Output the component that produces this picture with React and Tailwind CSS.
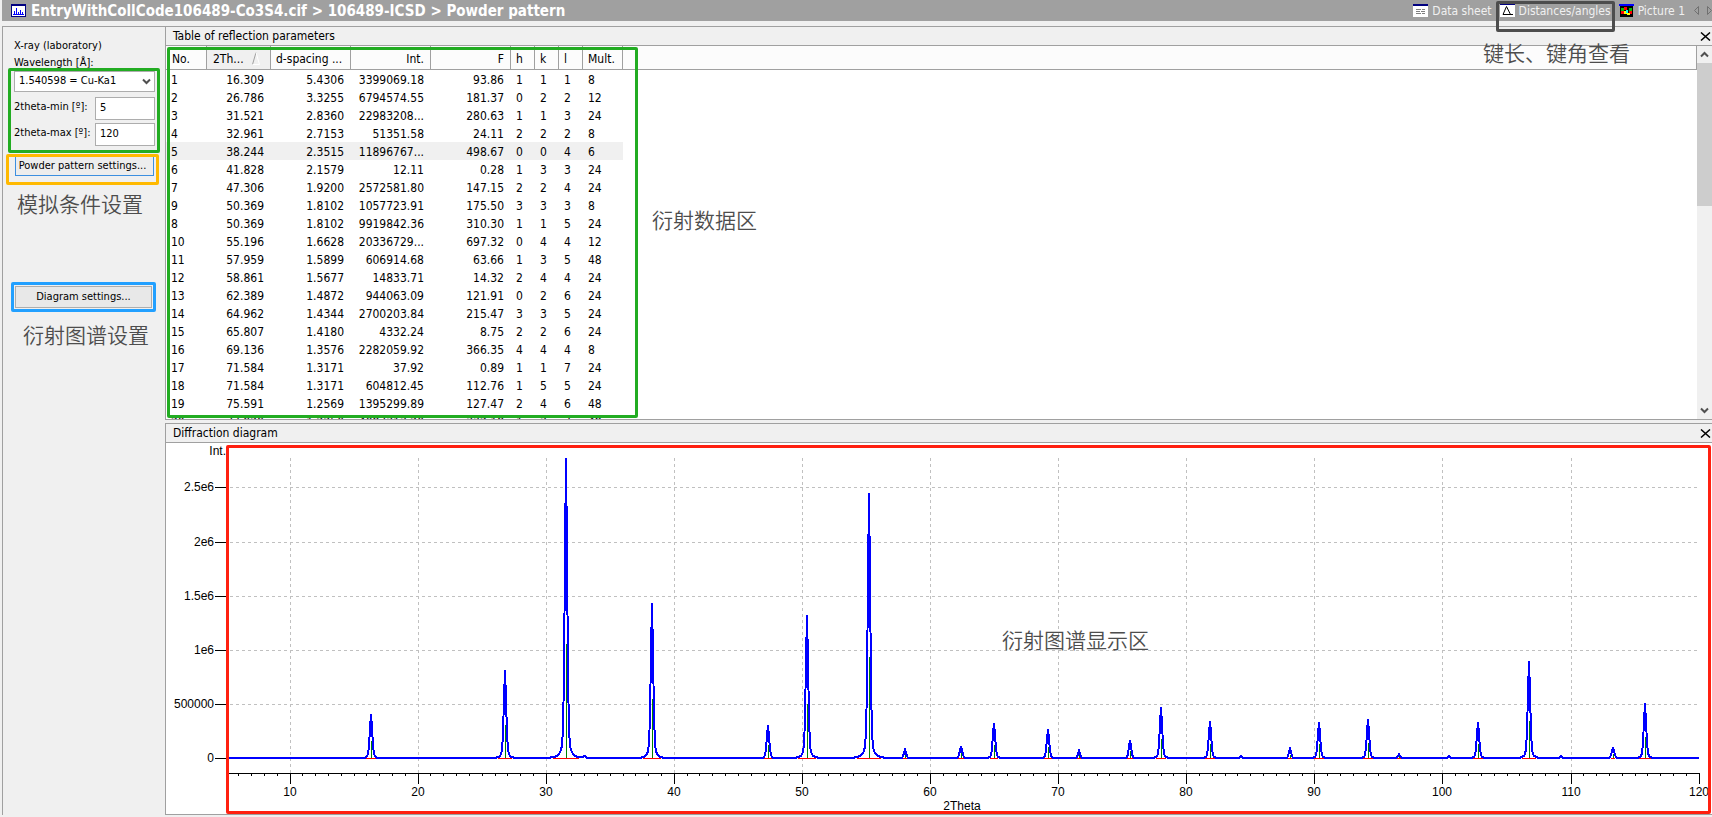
const reflections = [
  ['1', '16.309', '5.4306', '3399069.18', '93.86', '1', '1', '1', '8'],
  ['2', '26.786', '3.3255', '6794574.55', '181.37', '0', '2', '2', '12'],
  ['3', '31.521', '2.8360', '22983208...', '280.63', '1', '1', '3', '24'],
  ['4', '32.961', '2.7153', '51351.58', '24.11', '2', '2', '2', '8'],
  ['5', '38.244', '2.3515', '11896767...', '498.67', '0', '0', '4', '6'],
  ['6', '41.828', '2.1579', '12.11', '0.28', '1', '3', '3', '24'],
  ['7', '47.306', '1.9200', '2572581.80', '147.15', '2', '2', '4', '24'],
  ['9', '50.369', '1.8102', '1057723.91', '175.50', '3', '3', '3', '8'],
  ['8', '50.369', '1.8102', '9919842.36', '310.30', '1', '1', '5', '24'],
  ['10', '55.196', '1.6628', '20336729...', '697.32', '0', '4', '4', '12'],
  ['11', '57.959', '1.5899', '606914.68', '63.66', '1', '3', '5', '48'],
  ['12', '58.861', '1.5677', '14833.71', '14.32', '2', '4', '4', '24'],
  ['13', '62.389', '1.4872', '944063.09', '121.91', '0', '2', '6', '24'],
  ['14', '64.962', '1.4344', '2700203.84', '215.47', '3', '3', '5', '24'],
  ['15', '65.807', '1.4180', '4332.24', '8.75', '2', '2', '6', '24'],
  ['16', '69.136', '1.3576', '2282059.92', '366.35', '4', '4', '4', '8'],
  ['17', '71.584', '1.3171', '37.92', '0.89', '1', '1', '7', '24'],
  ['18', '71.584', '1.3171', '604812.45', '112.76', '1', '5', '5', '24'],
  ['19', '75.591', '1.2569', '1395299.89', '127.47', '2', '4', '6', '48'],
  ['20', '77.929', '1.2250', '4087313.20', '332.18', '1', '3', '7', '48'],
]

// [2theta, peak height in chart units]
const peaks = [
  [16.25, 44], [26.75, 88], [31.5, 300], [32.96, 2], [38.24, 155], [47.3, 33],
  [50.33, 143], [55.19, 265], [57.95, 8], [62.35, 12], [64.93, 35], [69.12, 29],
  [71.57, 7], [75.55, 18], [77.92, 51], [81.81, 37], [84.2, 2], [88, 9],
  [90.3, 36], [94.12, 39], [96.5, 4], [100.4, 2], [102.7, 36], [106.7, 97],
  [109.15, 2], [113.25, 11], [115.75, 55],
]

const BASE = 315
const AXIS = 330
const toX = (theta) => 60.5 + (theta - 5) * 12.81

const yTicks = [
  ['0', 315], ['500000', 261], ['1e6', 207], ['1.5e6', 153], ['2e6', 99], ['2.5e6', 44],
]

function profile(x) {
  let sum = 0
  for (const [theta, h] of peaks) {
    const d = (x - Math.round(toX(theta))) / 1.4
    if (Math.abs(d) > 14) continue
    sum += h * (0.4 / (1 + d * d) + 0.6 * Math.exp(-0.693 * d * d))
  }
  return sum
}

const curve = Array.from({ length: 1474 }, (_, i) => {
  const x = 60 + i
  return `${x},${BASE - Math.floor(profile(x))}`
}).join(' ')

function PatternIcon() {
  return (
    <svg width="15" height="13" viewBox="0 0 15 13" shapeRendering="crispEdges">
      <rect x=".5" y=".5" width="14" height="12" fill="#fff" stroke="#000080" />
      <path d="M0 1h15" stroke="#000080" strokeWidth="2" />
      <path d="M2 10.5h11M3.5 7v3M5.5 4v6M7.5 8v2M9.5 6v4M11.5 8v2" stroke="#0000ff" fill="none" />
    </svg>
  )
}

function SheetIcon() {
  return (
    <svg width="15" height="13" viewBox="0 0 15 13" shapeRendering="crispEdges">
      <rect width="15" height="13" fill="#fff" />
      <rect width="15" height="2" fill="#000080" />
      <path d="M3 5.5h5M9 5.5h3M3 7.5h4M8 7.5h4M3 9.5h5M9 9.5h3" stroke="#808080" fill="none" />
    </svg>
  )
}

function AngleIcon() {
  return (
    <svg width="15" height="13" viewBox="0 0 15 13">
      <rect width="15" height="13" fill="#fff" />
      <rect width="15" height="1" fill="#000080" />
      <path d="M6.500 2.500L3 10.500h10M6.500 2.500l4 8" stroke="#000" fill="none" />
    </svg>
  )
}

function PictureIcon() {
  return (
    <svg width="15" height="13" viewBox="0 0 15 13" shapeRendering="crispEdges">
      <rect width="15" height="2" fill="#0000ff" />
      <rect x="1" y="2" width="13" height="11" fill="#000" />
      <path d="M2 7h3v3H2zM5 3h3v3H5zM10 7h3v3h-3z" fill="#ff0000" />
      <path d="M2 4h3v3H2zM10 4h3v3h-3z" fill="#00c000" />
      <path d="M5 7h3v3H5zM8 9h3v2H8z" fill="#ffff00" />
      <path d="M7 6h2v3H7z" fill="#00ffff" />
    </svg>
  )
}

function Chevron({ up = false }) {
  return (
    <svg width="9" height="7" viewBox="0 0 9 7" className={up ? 'rotate-180' : ''}>
      <path d="M1 1.5l3.500 3.500L8 1.500" fill="none" stroke="#505050" strokeWidth="2" />
    </svg>
  )
}

function PanelTitle({ children }) {
  return (
    <div className="flex h-[19px] items-center justify-between border-b border-[#a0a0a0] pl-[7px] pr-px">
      <h2 className="text-[12px]">{children}</h2>
      <button type="button" aria-label="Close panel">
        <svg width="11" height="9" viewBox="0 0 11 9">
          <path d="M1 .5l9 8M10 .5l-9 8" stroke="#000" strokeWidth="1.500" />
        </svg>
      </button>
    </div>
  )
}

function TitleBar() {
  return (
    <header className="flex h-[21px] items-center justify-between bg-[#a0a0a0] pl-[9px] text-white">
      <div className="flex items-center gap-[5px]">
        <PatternIcon />
        <h1 className="text-[15px] font-bold leading-5">
          EntryWithCollCode106489-Co3S4.cif &gt; 106489-ICSD &gt; Powder pattern
        </h1>
      </div>
      <nav className="flex items-center gap-2 text-[12px] text-[#f0f0f0]">
        <a href="#sheet" className="flex items-center gap-1"><SheetIcon />Data sheet</a>
        <a href="#distances" className="relative flex items-center gap-1">
          <AngleIcon />Distances/angles
          <span className="absolute -inset-x-1 -top-px h-[31px] rounded-[2px] border-3 border-[#4d4d4d]" />
        </a>
        <a href="#picture" className="flex items-center gap-1"><PictureIcon />Picture 1</a>
        <svg width="19" height="9" viewBox="0 0 19 9" fill="none" stroke="#707070">
          <path d="M5.500 .5v8l-4-4zM14.500 .5v8l4-4z" />
        </svg>
      </nav>
    </header>
  )
}

function Caption({ children, className = '' }) {
  return (
    <p className={`font-['Noto_Sans_CJK_SC',sans-serif] text-[21px] font-[350] leading-6 text-[#4d4d4d] ${className}`}>
      {children}
    </p>
  )
}

function Settings() {
  return (
    <aside className="w-[162px] shrink-0 text-[11px]">
      <div className="flex flex-col pl-[11px] pt-[10px] leading-[17px]">
        <span>X-ray (laboratory)</span>
        <label htmlFor="wavelength">Wavelength [Å]:</label>
      </div>
      <div className="ml-[5px] mt-[-3px] flex h-[85px] w-[152px] flex-col rounded-[2px] border-3 border-[#22ac22] pl-[3px] pr-0.5">
        <div className="relative">
          <select id="wavelength" className="block h-[21px] w-full appearance-none border border-[#adadad] bg-white pl-1">
            <option>1.540598 = Cu-Ka1</option>
          </select>
          <span className="pointer-events-none absolute right-1 top-[7px]"><Chevron /></span>
        </div>
        <div className="mt-[5px] flex items-start justify-between">
          <label htmlFor="tmin" className="leading-5">2theta-min [º]:</label>
          <input id="tmin" defaultValue="5" className="h-[23px] w-[60px] border border-[#adadad] bg-white px-1 pb-[3px]" />
        </div>
        <div className="mt-[3px] flex items-start justify-between">
          <label htmlFor="tmax" className="leading-5">2theta-max [º]:</label>
          <input id="tmax" defaultValue="120" className="h-[23px] w-[60px] border border-[#adadad] bg-white px-1 pb-[3px]" />
        </div>
      </div>
      <div className="ml-[3px] mt-[1px] h-[31px] w-[153px] rounded-[2px] border-3 border-[#ffb900] pl-1.5 pr-0.5">
        <button type="button" className="block h-[19px] w-full whitespace-nowrap border border-t-0 border-[#3c8fe0] bg-[#ededed] pr-1 leading-[18px]">
          Powder pattern settings...
        </button>
      </div>
      <Caption className="ml-[14px] mt-[6px]">模拟条件设置</Caption>
      <div className="ml-[8px] mt-[67px] h-[30px] w-[145px] rounded-[2px] border-3 border-[#22a0ff] p-px">
        <button type="button" className="block h-full w-full border border-[#adadad] bg-[#e8e8e8] leading-4">
          Diagram settings...
        </button>
      </div>
      <Caption className="ml-[20px] mt-[10px]">衍射图谱设置</Caption>
    </aside>
  )
}

const th = 'h-[24px] border-b border-r border-[#a0a0a0] pt-0.5 font-normal'

function ReflectionTable() {
  return (
    <section className="relative">
      <PanelTitle>Table of reflection parameters</PanelTitle>
      <div className="flex h-[373px] overflow-hidden bg-white">
        <table className="w-full table-fixed border-separate border-spacing-0 self-start text-[12px] leading-4">
          <colgroup>
            <col className="w-[41px]" />
            <col className="w-[64px]" />
            <col className="w-[80px]" />
            <col className="w-[80px]" />
            <col className="w-[80px]" />
            <col className="w-[24px]" />
            <col className="w-[24px]" />
            <col className="w-[24px]" />
            <col className="w-[40px]" />
            <col />
          </colgroup>
          <thead className="bg-[#fcfcfc]">
            <tr>
              <th className={`${th} pl-1.5 text-left`}>No.</th>
              <th className={`${th} bg-[#f0f0f0] pl-1.5 text-left`}>
                <span className="flex items-center gap-2">
                  2Th...
                  <svg width="8" height="13" viewBox="0 0 8 13" fill="none">
                    <path d="M.5 12.500L4 .5" stroke="#a0a0a0" />
                    <path d="M4 .5l3.500 12H.5" stroke="#fff" />
                  </svg>
                </span>
              </th>
              <th className={`${th} whitespace-nowrap pl-[5px] text-left`}>d-spacing ...</th>
              <th className={`${th} pr-1.5 text-right`}>Int.</th>
              <th className={`${th} pr-1.5 text-right`}>F</th>
              <th className={`${th} pl-[5px] text-left`}>h</th>
              <th className={`${th} pl-[5px] text-left`}>k</th>
              <th className={`${th} pl-[5px] text-left`}>l</th>
              <th className={`${th} pl-[5px] text-left`}>Mult.</th>
              <th className={th} />
            </tr>
          </thead>
          <tbody>
            {reflections.map((row) => (
              <tr key={row[0]} className={row[0] === '5' ? '[&>td]:bg-[#f0f0f0]' : ''}>
                {row.map((cell, i) => (
                  <td key={i} className={i > 0 && i < 5 ? 'pr-[7px] pt-0.5 text-right' : 'pl-[5px] pt-0.5'}>
                    {cell}
                  </td>
                ))}
              </tr>
            ))}
          </tbody>
        </table>
        <div className="flex w-[15px] shrink-0 flex-col items-center bg-[#f0f0f0]">
          <div className="flex h-[17px] items-center"><Chevron up /></div>
          <div className="h-[143px] w-full bg-[#cdcdcd]" />
          <div className="mt-auto flex h-[17px] items-center"><Chevron /></div>
        </div>
      </div>
      <div className="absolute left-[1px] top-[20px] h-[371px] w-[471px] rounded-[2px] border-3 border-[#22ac22]" />
      <Caption className="absolute left-[486px] top-[180px]">衍射数据区</Caption>
      <Caption className="absolute right-[82px] top-[13px]">键长、键角查看</Caption>
    </section>
  )
}

function Diagram() {
  return (
    <section className="relative">
      <PanelTitle>Diffraction diagram</PanelTitle>
      <svg viewBox="0 0 1546 371" className="block h-auto w-full bg-white font-['Liberation_Sans',sans-serif] text-[12px]">
        <g shapeRendering="crispEdges" fill="none">
          <g stroke="#c0c0c0" strokeDasharray="3 3">
            {yTicks.slice(1).map(([label, y]) => (
              <path key={label} d={`M64 ${y + 0.5}H1533`} />
            ))}
            {[10, 20, 30, 40, 50, 60, 70, 80, 90, 100, 110].map((t) => (
              <path key={t} d={`M${Math.round(toX(t)) - 0.5} 15V${AXIS}`} />
            ))}
          </g>
          <g stroke="#000">
            {yTicks.map(([label, y]) => (
              <path key={label} d={`M49 ${y + 0.5}H60`} />
            ))}
            <path d={`M60 ${AXIS + 0.5}H1534`} />
            {Array.from({ length: 115 }, (_, i) => i + 6).map((t) => (
              <path key={t} d={`M${Math.round(toX(t)) - 0.5} ${AXIS}v${t % 10 === 0 ? 11 : 3}`} />
            ))}
          </g>
          <polyline points={curve} stroke="#0000ff" strokeWidth="2" />
          {peaks.filter(([, h]) => h > 3).map(([t, h]) => {
            const x = Math.round(toX(t))
            const w = Math.round(0.75 * Math.sqrt(h))
            return (
              <g key={t}>
                <path d={`M${x - w} ${BASE + 0.5}h${2 * w}`} stroke="#ff0000" />
                <path d={`M${x + 0.5} ${BASE}v${-Math.round(h * 0.38)}`} stroke="#008000" />
              </g>
            )
          })}
        </g>
        <g textAnchor="end">
          <text x="60" y="12">Int.</text>
          {yTicks.map(([label, y]) => (
            <text key={label} x="48" y={y + 4}>{label}</text>
          ))}
        </g>
        <g textAnchor="middle">
          {[10, 20, 30, 40, 50, 60, 70, 80, 90, 100, 110, 120].map((t) => (
            <text key={t} x={Math.round(toX(t)) - 1} y="353">{t}</text>
          ))}
          <text x="796" y="367">2Theta</text>
        </g>
      </svg>
      <div className="absolute bottom-0 left-[60px] right-[1px] top-[21px] rounded-[2px] border-3 border-[#ff2010]" />
      <Caption className="absolute left-[836px] top-[203px]">衍射图谱显示区</Caption>
    </section>
  )
}

export default function App() {
  return (
    <div className="min-h-screen bg-[#f0f0f0] pl-0.5 font-['DejaVu_Sans_Condensed','Noto_Sans',sans-serif] text-black">
      <TitleBar />
      <div className="mt-[5px] flex border-l border-t border-[#a0a0a0]">
        <Settings />
        <main className="flex min-w-0 flex-1 flex-col gap-[3px]">
          <div className="border-b border-l border-[#a0a0a0]"><ReflectionTable /></div>
          <div className="border-y border-l border-[#a0a0a0]"><Diagram /></div>
        </main>
      </div>
    </div>
  )
}
